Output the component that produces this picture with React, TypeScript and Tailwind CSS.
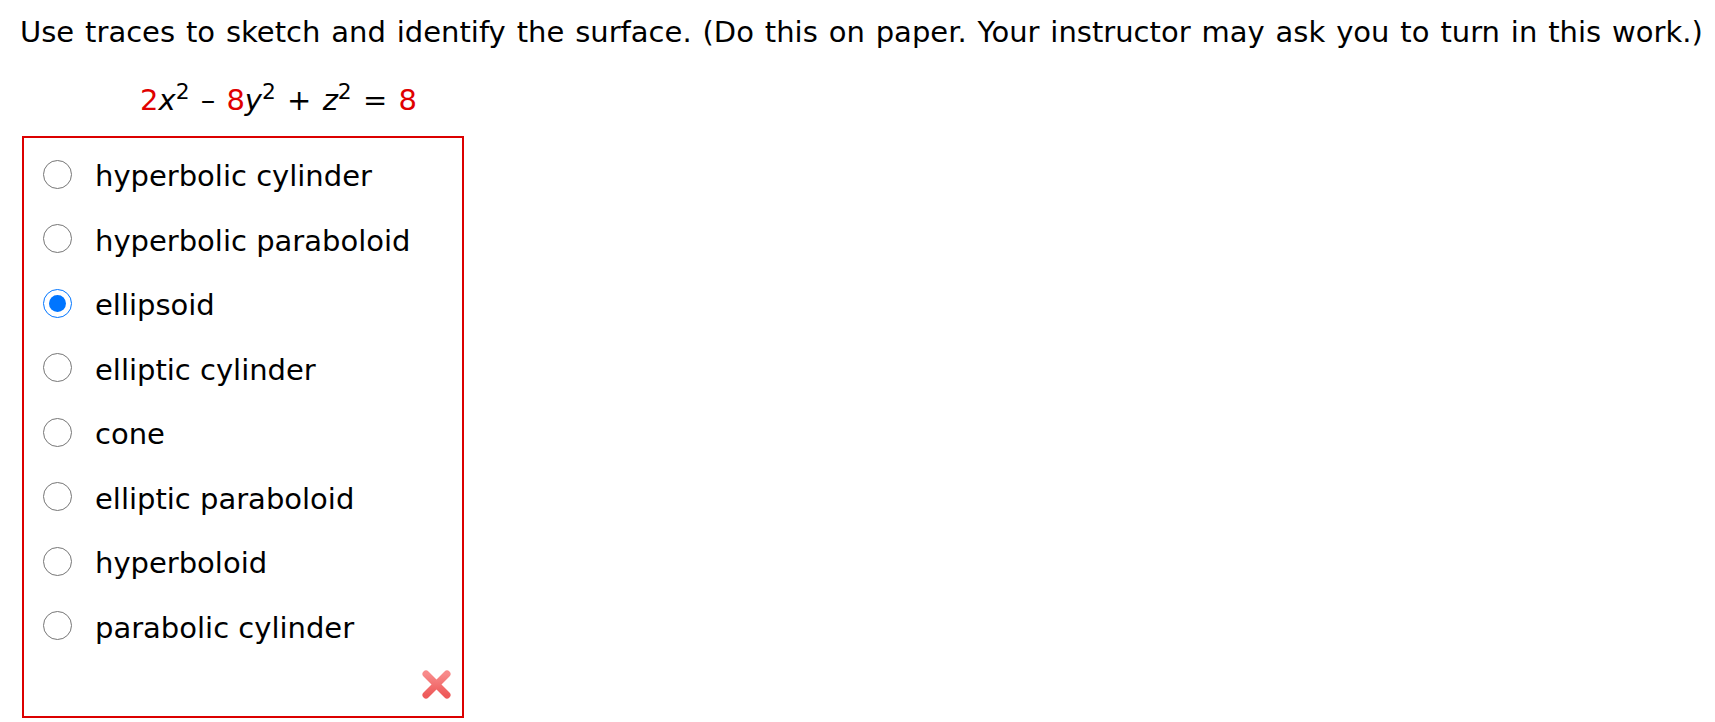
import React from "react";

const options = [
  "hyperbolic cylinder",
  "hyperbolic paraboloid",
  "ellipsoid",
  "elliptic cylinder",
  "cone",
  "elliptic paraboloid",
  "hyperboloid",
  "parabolic cylinder",
];

const Radio = ({ checked }: { checked: boolean }) =>
  checked ? (
    <span className="flex h-[29px] w-[29px] shrink-0 items-center justify-center rounded-full border-[1.5px] border-[#0075ff] bg-white">
      <span className="h-[17px] w-[17px] rounded-full bg-[#0075ff]" />
    </span>
  ) : (
    <span className="h-[29px] w-[29px] shrink-0 rounded-full border border-[#767676] bg-white" />
  );

const WrongMark = () => (
  <svg width="31" height="31" viewBox="0 0 31 31" aria-label="incorrect">
    <defs>
      <linearGradient id="xg" x1="0" y1="0" x2="0" y2="1">
        <stop offset="0" stopColor="#f88484" />
        <stop offset="1" stopColor="#ee5252" />
      </linearGradient>
    </defs>
    <g stroke="url(#xg)" strokeWidth="7" strokeLinecap="round" opacity="0.95">
      <line x1="5" y1="5" x2="26" y2="26" />
      <line x1="26" y1="5" x2="5" y2="26" />
    </g>
  </svg>
);

export default function App() {
  return (
    <div className="min-h-screen overflow-hidden bg-white px-[22px] pt-[14px] text-[29px] leading-[36px] text-black [font-family:'DejaVu_Sans',Verdana,sans-serif]">
      <p className="-ml-[2px] whitespace-nowrap [word-spacing:1.7px]">
        Use traces to sketch and identify the surface. (Do this on paper. Your instructor may ask you to turn in this work.)
      </p>

      <p className="mt-[32px] whitespace-nowrap pl-[118px] [word-spacing:2px]">
        <span className="text-[#e00000]">2</span>
        <i>x</i>
        <sup>2</sup> – <span className="text-[#e00000]">8</span>
        <i>y</i>
        <sup>2</sup> + <i>z</i>
        <sup>2</sup> = <span className="text-[#e00000]">8</span>
      </p>

      <div className="mt-[18px] flex w-[442px] flex-col border-2 border-[#dc0000] pt-[4px]">
        {options.map((label) => (
          <label key={label} className="flex h-[64.5px] items-center pl-[19px]">
            <Radio checked={label === "ellipsoid"} />
            <span className="ml-[23px] mt-[4px]">{label}</span>
          </label>
        ))}
        <div className="mb-[16px] mr-[10px] mt-[11px] flex justify-end">
          <WrongMark />
        </div>
      </div>
    </div>
  );
}
